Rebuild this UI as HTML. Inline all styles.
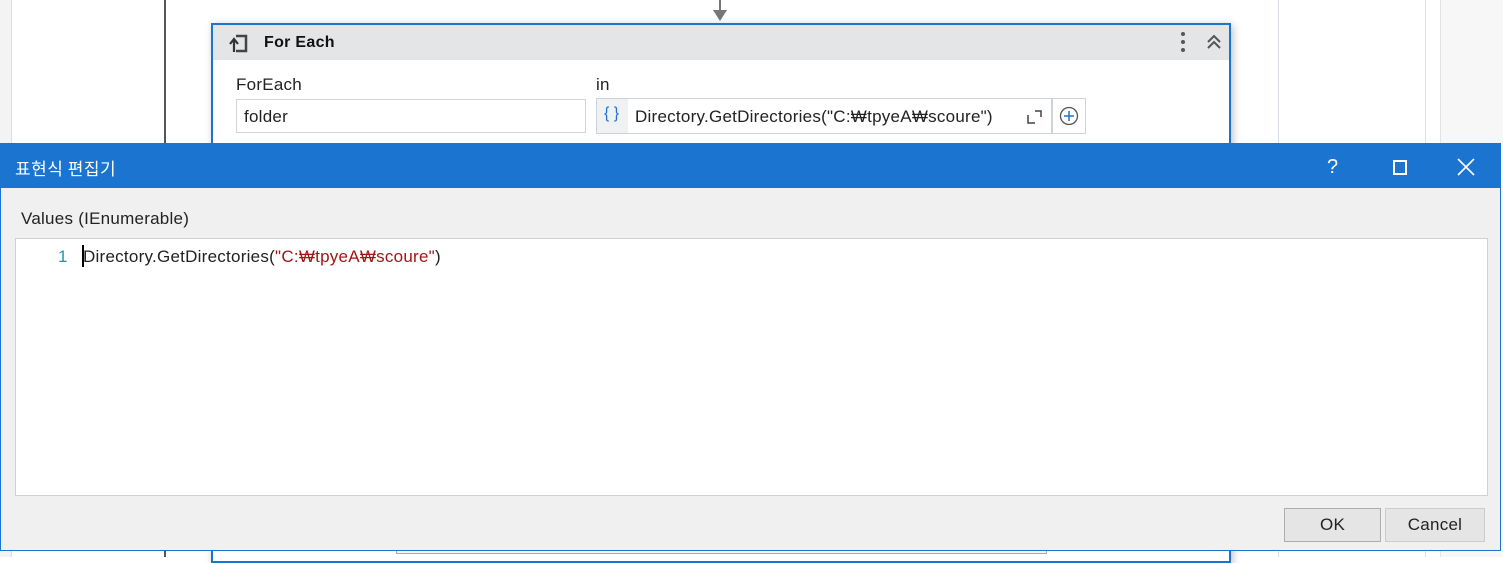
<!DOCTYPE html>
<html><head><meta charset="utf-8"><style>
*{margin:0;padding:0;box-sizing:border-box}
body{width:1503px;height:557px;overflow:hidden;background:#fff;position:relative;font-family:"Segoe UI","Liberation Sans","Noto Sans CJK KR",sans-serif;color:#222}
.a{position:absolute}
.t{font-size:17px;letter-spacing:0.25px;white-space:nowrap}
</style></head><body>
<div class="a" style="left:0;top:0;width:12px;height:557px;background:#f3f3f3;border-right:1px solid #ddd"></div>
<div class="a" style="left:164px;top:0;width:2px;height:557px;background:#555"></div>
<div class="a" style="left:1278px;top:0;width:1px;height:557px;background:#d8dde3"></div>
<div class="a" style="left:1425px;top:0;width:1px;height:557px;background:#dde"></div>
<div class="a" style="left:1440px;top:0;width:63px;height:557px;background:#f7f7f7;border-left:1px solid #e3e3e3"></div>
<div class="a" style="left:719px;top:0;width:2px;height:12px;background:#777"></div>
<div class="a" style="left:713px;top:10px;width:0;height:0;border-left:7px solid transparent;border-right:7px solid transparent;border-top:11px solid #777"></div>
<!-- card -->
<div class="a" style="left:211px;top:23px;width:1020px;height:540px;border:2px solid #1b75d0;background:#fff;box-shadow:2px 2px 8px rgba(0,0,0,.25)">
 <div class="a" style="left:0;top:0;width:1016px;height:35px;background:#e4e5e7"></div>
 <svg class="a" style="left:14px;top:7px" width="22" height="22" viewBox="0 0 22 22"><path d="M9 4H19V19H9" fill="none" stroke="#444" stroke-width="2.5"/><path d="M7 20V8M3 12L7 7L11 12" fill="none" stroke="#333" stroke-width="2.2"/></svg>
 <div class="a" style="left:51px;top:9px;font-size:16px;font-weight:bold;color:#111;letter-spacing:0.3px">For Each</div>
 <div class="a" style="left:968px;top:7px;width:4px;height:4px;border-radius:2px;background:#555;box-shadow:0 8px 0 #555,0 16px 0 #555"></div>
 <svg class="a" style="left:993px;top:9px" width="16" height="16" viewBox="0 0 16 16"><path d="M2 8L8 2L14 8M2 14L8 8L14 14" fill="none" stroke="#555" stroke-width="2"/></svg>
 <div class="a t" style="left:23px;top:50px">ForEach</div>
 <div class="a t" style="left:23px;top:74px;width:350px;height:34px;border:1px solid #d5d5d5;padding:7px 0 0 7px">folder</div>
 <div class="a t" style="left:383px;top:50px">in</div>
 <div class="a" style="left:383px;top:73px;width:457px;height:36px;border:1px solid #cdd3d9">
  <div class="a" style="left:0;top:0;width:31px;height:34px;background:#f0f1f3;color:#1b75d0;font-size:16px;padding:6px 0 0 7px">{ }</div>
  <div class="a t" style="left:38px;top:8px">Directory.GetDirectories("C:₩tpyeA₩scoure")</div>
  <svg class="a" style="left:430px;top:10px" width="16" height="16"><path d="M1 6V14H8M8 2H14V8" fill="none" stroke="#444" stroke-width="1.5"/></svg>
  <div class="a" style="left:454px;top:0;width:2px;height:34px;background:#cdd3d9"></div>
 </div>
 <div class="a" style="left:839px;top:73px;width:34px;height:36px;border:1px solid #cdd3d9;border-left:none"></div>
 <svg class="a" style="left:846px;top:81px" width="20" height="20"><circle cx="10" cy="10" r="8.5" fill="none" stroke="#555" stroke-width="1.3"/><path d="M10 5V15M5 10H15" stroke="#1b75d0" stroke-width="1.5"/></svg>
</div>
<div class="a" style="left:396px;top:547px;width:651px;height:7px;border:1px solid #aaa;background:#f4f4f4"></div>
<!-- dialog -->
<div class="a" style="left:0;top:143px;width:1501px;height:408px;border:1px solid #1b75d0;background:#f0f0f0">
 <div class="a" style="left:0;top:0;width:1499px;height:44px;background:#1b75d0"></div>
 <div class="a" style="left:14px;top:11px;font-size:17px;color:#fff;font-family:'Noto Sans CJK KR',sans-serif;letter-spacing:0.5px">표현식 편집기</div>
 <div class="a" style="left:1326px;top:12px;font-size:20px;color:#fff">?</div>
 <div class="a" style="left:1392px;top:16px;width:14px;height:15px;border:2px solid #fff"></div>
 <svg class="a" style="left:1456px;top:14px" width="18" height="18"><path d="M1 1L17 17M17 1L1 17" stroke="#fff" stroke-width="1.6"/></svg>
 <div class="a t" style="left:20px;top:65px">Values (IEnumerable)</div>
 <div class="a" style="left:14px;top:94px;width:1473px;height:258px;background:#fff;border:1px solid #d0d0d0"></div>
 <div class="a t" style="left:57px;top:103px;color:#2b91af">1</div>
 <div class="a" style="left:81px;top:101px;width:2px;height:22px;background:#000"></div>
 <div class="a t" style="left:82px;top:103px">Directory.GetDirectories(<span style="color:#a31515">"C:₩tpyeA₩scoure"</span>)</div>
 <div class="a t" style="left:1283px;top:364px;width:97px;height:34px;border:1px solid #adadad;background:#e5e5e5;text-align:center;padding-top:6px">OK</div>
 <div class="a t" style="left:1384px;top:364px;width:100px;height:34px;border:1px solid #ccc;background:#e5e5e5;text-align:center;padding-top:6px">Cancel</div>
</div>
</body></html>
